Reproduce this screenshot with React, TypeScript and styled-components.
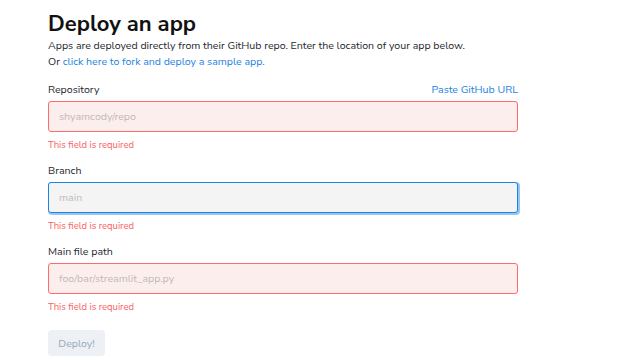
import React from 'react';
import styled, { createGlobalStyle } from 'styled-components';

const GlobalStyle = createGlobalStyle`
  html, body {
    margin: 0;
    padding: 0;
    background: #ffffff;
    font-family: "Nunito Sans", Lato, "Noto Sans", sans-serif;
    color: #262730;
  }
`;

const Page = styled.main`
  width: 470px;
  padding: 11px 0 0 48px;
`;

const Title = styled.h1`
  margin: 0;
  font-size: 22px;
  line-height: 26px;
  font-weight: 700;
  color: #111;
`;

const Intro = styled.p`
  margin: 1px 0 0;
  font-size: 10.6px;
  line-height: 16px;
  color: #262730;
`;

const Link = styled.a`
  color: #1c83e1;
  font-size: 10.6px;
  text-decoration: none;
  cursor: pointer;
`;

const Form = styled.form`
  display: flex;
  flex-direction: column;
  margin-top: 11px;
`;

const Field = styled.div`
  display: flex;
  flex-direction: column;
  margin-bottom: 10px;
`;

const LabelRow = styled.div`
  display: flex;
  justify-content: space-between;
  align-items: center;
  height: 16px;
  margin-bottom: 4px;
`;

const Label = styled.label`
  font-size: 10.6px;
  color: #262730;
`;

const Input = styled.input<{ $error?: boolean; $focused?: boolean }>`
  box-sizing: border-box;
  width: 470px;
  height: 31px;
  padding: 0 10px;
  font-family: inherit;
  font-size: 10.6px;
  border-radius: 3px;
  outline: none;
  border: 1px solid ${(p) => (p.$focused ? '#1c83e1' : '#ff6b6b')};
  background: ${(p) => (p.$focused ? '#f4f4f4' : '#fdeeee')};
  box-shadow: ${(p) => (p.$focused ? '1px 1px 0 1px #99c5f5' : 'none')};
  caret-color: #555;

  &::placeholder {
    color: #c0b9b9;
  }
`;

const ErrorText = styled.span`
  margin-top: 6px;
  font-size: 9.5px;
  line-height: 14px;
  color: #f86262;
`;

const DeployButton = styled.button`
  align-self: flex-start;
  margin-top: 6px;
  width: 57px;
  height: 26px;
  padding: 0;
  border: none;
  border-radius: 4px;
  background: #edf0f4;
  color: #9ba7ba;
  font-family: inherit;
  font-size: 10.6px;
  cursor: not-allowed;
`;

const fields = [
  { label: 'Repository', placeholder: 'shyamcody/repo', paste: true },
  { label: 'Branch', placeholder: 'main', focused: true },
  { label: 'Main file path', placeholder: 'foo/bar/streamlit_app.py' },
];

const App = () => {
  return (
    <>
      <GlobalStyle />
      <Page>
        <Title>Deploy an app</Title>
        <Intro>
          Apps are deployed directly from their GitHub repo. Enter the location of your app below.
          <br />
          Or <Link>click here to fork and deploy a sample app.</Link>
        </Intro>
        <Form onSubmit={(e) => e.preventDefault()}>
          {fields.map((f) => (
            <Field key={f.label}>
              <LabelRow>
                <Label>{f.label}</Label>
                {f.paste && <Link>Paste GitHub URL</Link>}
              </LabelRow>
              <Input
                placeholder={f.placeholder}
                $focused={f.focused}
                $error={!f.focused}
                autoFocus={f.focused}
              />
              <ErrorText>This field is required</ErrorText>
            </Field>
          ))}
          <DeployButton type="submit" disabled>
            Deploy!
          </DeployButton>
        </Form>
      </Page>
    </>
  );
};

export default App;
